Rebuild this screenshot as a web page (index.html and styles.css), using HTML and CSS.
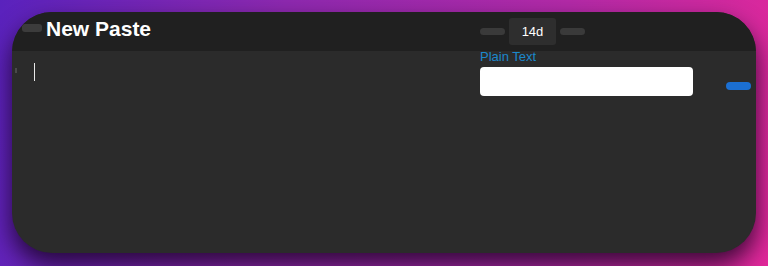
FILE: index.html
```html
<!DOCTYPE html>
<html lang="en">
<head>
  <meta charset="UTF-8">
  <meta name="viewport" content="width=device-width, initial-scale=1.0">
  <title>New Paste</title>
  <link rel="stylesheet" href="styles.css">
</head>
<body>
  <div class="window">
    <div class="header">
      <div class="title-area">
        <span class="menu-btn"></span>
        <h1>New Paste</h1>
      </div>
      <div class="expiry">
        <span class="pill"></span>
        <span class="expiry-value">14d</span>
        <span class="pill"></span>
      </div>
    </div>
    <div class="content">
      <div class="editor">
        <span class="gutter"></span>
        <span class="caret"></span>
      </div>
      <div class="sidebar">
        <label for="lang">Plain Text</label>
        <input id="lang" type="text">
      </div>
      <div class="actions">
        <button class="submit"></button>
      </div>
    </div>
  </div>
</body>
</html>
```

FILE: styles.css
```css
body {
  margin: 0;
  padding: 12px;
  height: 266px;
  box-sizing: border-box;
  font-family: 'Liberation Sans', Arial, sans-serif;
  background: linear-gradient(100deg, #5a22bd 0%, #8e29b0 35%, #b42aa8 70%, #e2289a 100%);
  overflow: hidden;
}
.window {
  width: 744px;
  height: 241px;
  background: #2b2b2b;
  border-radius: 40px;
  overflow: hidden;
  box-shadow: 0 12px 24px rgba(20, 0, 30, 0.8);
}
.header,
.content {
  display: grid;
  grid-template-columns: 468px 213px 63px;
}
.header {
  height: 39px;
  background: #202020;
}
.title-area {
  display: flex;
  align-items: flex-start;
  padding-left: 10px;
}
.menu-btn {
  width: 20px;
  height: 8px;
  margin-top: 12px;
  background: #3c3c3c;
  border-radius: 3px;
}
h1 {
  margin: 5px 0 0 4px;
  font-size: 21px;
  font-weight: bold;
  color: #ffffff;
}
.expiry {
  display: flex;
  align-items: center;
  gap: 4px;
}
.pill {
  width: 25px;
  height: 7px;
  background: #3a3a3a;
  border-radius: 4px;
}
.expiry-value {
  width: 47px;
  height: 27px;
  line-height: 27px;
  text-align: center;
  background: #2e2e2e;
  border-radius: 3px;
  color: #ffffff;
  font-size: 13px;
}
.editor {
  position: relative;
  height: 202px;
}
.gutter {
  position: absolute;
  left: 3px;
  top: 17px;
  width: 2px;
  height: 5px;
  background: #4a4a4a;
}
.caret {
  position: absolute;
  left: 22px;
  top: 12px;
  width: 1px;
  height: 18px;
  background: #e8e8e8;
}
.sidebar {
  display: flex;
  flex-direction: column;
}
label {
  margin-top: -2px;
  font-size: 13px;
  color: #1b88cc;
}
input {
  margin-top: 3px;
  height: 29px;
  padding: 0;
  border: none;
  border-radius: 4px;
  background: #ffffff;
  box-sizing: border-box;
}
.actions {
  padding: 31px 0 0 33px;
}
.submit {
  display: block;
  width: 25px;
  height: 8px;
  padding: 0;
  border: none;
  border-radius: 4px;
  background: #1b6fd2;
}
```
